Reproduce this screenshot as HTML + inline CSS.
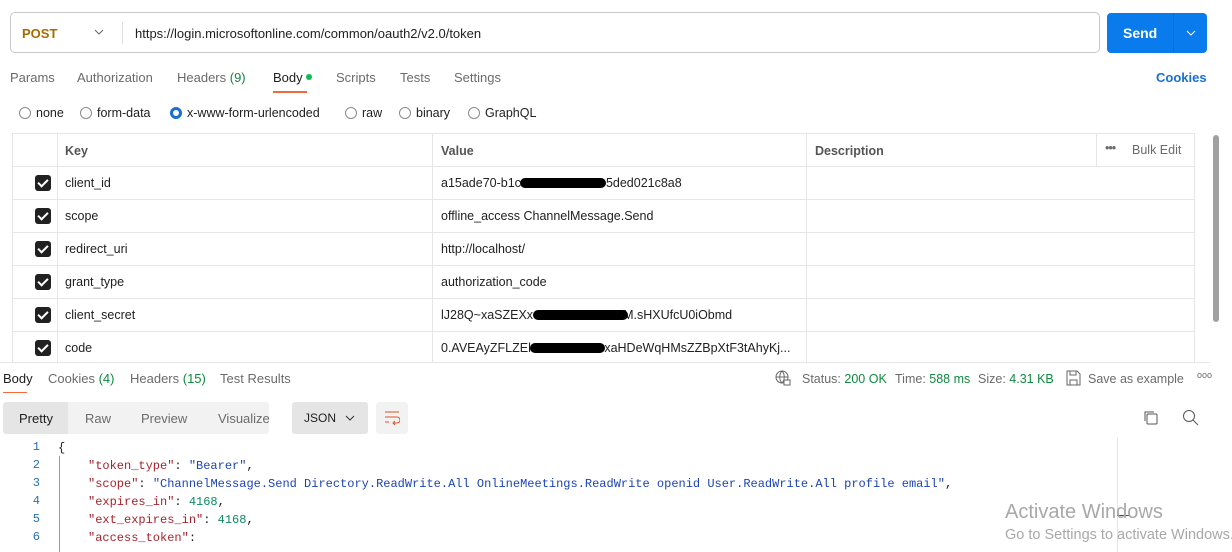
<!DOCTYPE html>
<html><head><meta charset="utf-8"><style>
*{box-sizing:border-box;margin:0;padding:0}
body{width:1232px;height:552px;overflow:hidden;background:#fff;font-family:"Liberation Sans",sans-serif;font-size:12.5px;color:#212121;position:relative}
.a{position:absolute;white-space:nowrap}
.g{color:#6b6b6b}
.gr{color:#0f8a3f}
.hl{position:absolute;height:1px;background:#e6e6e6}
.vl{position:absolute;width:1px;background:#e6e6e6}
.cb{position:absolute;left:35px;width:16px;height:16px;background:#212121;border-radius:3px}
.cb:after{content:"";position:absolute;left:5px;top:2px;width:4px;height:8px;border:solid #fff;border-width:0 2px 2px 0;transform:rotate(45deg)}
.rd{position:absolute;width:12px;height:12px;border:1px solid #8a8a8a;border-radius:50%}
.blk{position:absolute;background:#000;height:10px;border-radius:5px}
.mono{font-family:"Liberation Mono",monospace;font-size:12px}
.k{color:#a6242d}.s{color:#1c44b5}.n{color:#0f8a5f}
.ln{position:absolute;left:20px;width:20px;text-align:right;color:#2a6fb0;font-family:"Liberation Mono",monospace;font-size:12px}
</style></head><body>
<div class="a" style="left:10px;top:12px;width:1090px;height:41px;border:1px solid #c8c8c8;border-radius:5px"></div>
<div class="a" style="left:22px;top:26px;color:#a86b00;font-weight:bold;font-size:13px">POST</div>
<svg class="a" style="left:94px;top:29px" width="10" height="7"><path d="M1 1l4 4 4-4" stroke="#666" fill="none"/></svg>
<div class="vl" style="left:122px;top:22px;height:22px;background:#ddd"></div>
<div class="a" style="left:135px;top:26px;font-size:13px">https://login.microsoftonline.com/common/oauth2/v2.0/token</div>
<div class="a" style="left:1107px;top:13px;width:100px;height:40px;background:#097bed;border-radius:4px"></div>
<div class="vl" style="left:1173px;top:13px;height:40px;background:#0a6cd0"></div>
<div class="a" style="left:1123px;top:25px;color:#fff;font-weight:bold;font-size:14px">Send</div>
<svg class="a" style="left:1186px;top:30px" width="10" height="7"><path d="M1 1l4 4 4-4" stroke="#fff" fill="none"/></svg>
<div class="a g" style="left:10px;top:70px;font-size:13px">Params</div>
<div class="a g" style="left:77px;top:70px;font-size:13px">Authorization</div>
<div class="a g" style="left:177px;top:70px;font-size:13px">Headers <span class="gr">(9)</span></div>
<div class="a" style="left:273px;top:70px;font-size:13px">Body</div>
<div class="a" style="left:306px;top:74px;width:6px;height:6px;border-radius:50%;background:#0cbb52"></div>
<div class="a" style="left:273px;top:91px;width:34px;height:2px;background:#f26b3a"></div>
<div class="a g" style="left:336px;top:70px;font-size:13px">Scripts</div>
<div class="a g" style="left:400px;top:70px;font-size:13px">Tests</div>
<div class="a g" style="left:454px;top:70px;font-size:13px">Settings</div>
<div class="a" style="left:1156px;top:70px;font-size:13px;font-weight:bold;color:#1a6fd6">Cookies</div>
<div class="rd" style="left:19px;top:107px"></div><div class="a" style="left:36px;top:106px">none</div>
<div class="rd" style="left:80px;top:107px"></div><div class="a" style="left:97px;top:106px">form-data</div>
<div class="rd" style="left:170px;top:107px;border:3px solid #1a6fd6"></div><div class="a" style="left:187px;top:106px">x-www-form-urlencoded</div>
<div class="rd" style="left:345px;top:107px"></div><div class="a" style="left:362px;top:106px">raw</div>
<div class="rd" style="left:399px;top:107px"></div><div class="a" style="left:416px;top:106px">binary</div>
<div class="rd" style="left:468px;top:107px"></div><div class="a" style="left:485px;top:106px">GraphQL</div>
<div class="hl" style="left:12px;top:133px;width:1183px"></div>
<div class="hl" style="left:12px;top:166px;width:1183px"></div>
<div class="hl" style="left:12px;top:199px;width:1183px"></div>
<div class="hl" style="left:12px;top:232px;width:1183px"></div>
<div class="hl" style="left:12px;top:265px;width:1183px"></div>
<div class="hl" style="left:12px;top:298px;width:1183px"></div>
<div class="hl" style="left:12px;top:331px;width:1183px"></div>
<div class="vl" style="left:12px;top:133px;height:230px"></div>
<div class="vl" style="left:57px;top:133px;height:230px"></div>
<div class="vl" style="left:432px;top:133px;height:230px"></div>
<div class="vl" style="left:806px;top:133px;height:230px"></div>
<div class="vl" style="left:1096px;top:133px;height:33px"></div>
<div class="vl" style="left:1194px;top:133px;height:230px"></div>
<div class="a" style="left:65px;top:144px;font-weight:bold;color:#555">Key</div>
<div class="a" style="left:441px;top:144px;font-weight:bold;color:#555">Value</div>
<div class="a" style="left:815px;top:144px;font-weight:bold;color:#555">Description</div>
<div class="a g" style="left:1105px;top:141px;letter-spacing:-1px">•••</div>
<div class="a g" style="left:1132px;top:143px">Bulk Edit</div>
<div class="cb" style="top:175px"></div><div class="a" style="left:65px;top:176px">client_id</div>
<div class="a" style="left:441px;top:176px">a15ade70-b1c<span style="display:inline-block;width:85px"></span>5ded021c8a8</div>
<div class="blk" style="left:520px;top:178px;width:86px"></div>
<div class="cb" style="top:208px"></div><div class="a" style="left:65px;top:209px">scope</div>
<div class="a" style="left:441px;top:209px">offline_access ChannelMessage.Send</div>
<div class="cb" style="top:241px"></div><div class="a" style="left:65px;top:242px">redirect_uri</div>
<div class="a" style="left:441px;top:242px">http://localhost/</div>
<div class="cb" style="top:274px"></div><div class="a" style="left:65px;top:275px">grant_type</div>
<div class="a" style="left:441px;top:275px">authorization_code</div>
<div class="cb" style="top:307px"></div><div class="a" style="left:65px;top:308px">client_secret</div>
<div class="a" style="left:441px;top:308px">lJ28Q~xaSZEXx<span style="display:inline-block;width:90px"></span>M.sHXUfcU0iObmd</div>
<div class="blk" style="left:533px;top:310px;width:95px"></div>
<div class="cb" style="top:340px"></div><div class="a" style="left:65px;top:341px">code</div>
<div class="a" style="left:441px;top:341px">0.AVEAyZFLZEk<span style="display:inline-block;width:70px"></span>xaHDeWqHMsZZBpXtF3tAhyKj...</div>
<div class="blk" style="left:530px;top:343px;width:75px"></div>
<div class="a" style="left:1213px;top:135px;width:6px;height:187px;background:#a0a0a0;border-radius:3px"></div>
<div class="a" style="left:0;top:362px;width:1210px;height:190px;background:#fff;border-top:1px solid #e6e6e6"></div>
<div class="a" style="left:3px;top:371px;font-size:13px">Body</div>
<div class="a" style="left:3px;top:392px;width:24px;height:1px;background:#f26b3a"></div>
<div class="a g" style="left:48px;top:371px;font-size:13px">Cookies <span class="gr">(4)</span></div>
<div class="a g" style="left:130px;top:371px;font-size:13px">Headers <span class="gr">(15)</span></div>
<div class="a g" style="left:220px;top:371px;font-size:13px">Test Results</div>
<svg class="a" style="left:775px;top:370px" width="16" height="16"><circle cx="7" cy="7" r="6" stroke="#666" fill="none"/><path d="M1 7h12M7 1c-3 3-3 9 0 12M7 1c3 3 3 9 0 12" stroke="#666" fill="none"/><rect x="9" y="10" width="6" height="5" fill="#fff" stroke="#666"/></svg>
<div class="a g" style="left:802px;top:372px">Status: <span class="gr">200 OK</span></div>
<div class="a g" style="left:895px;top:372px">Time: <span class="gr">588 ms</span></div>
<div class="a g" style="left:978px;top:372px">Size: <span class="gr">4.31 KB</span></div>
<svg class="a" style="left:1066px;top:370px" width="15" height="16"><path d="M1 1h10l3 3v11H1z M4 1v4h6V1 M4 15v-5h7v5" stroke="#666" fill="none"/></svg>
<div class="a g" style="left:1088px;top:372px">Save as example</div>
<div class="a g" style="left:1197px;top:370px;font-size:9px">ooo</div>
<div class="a" style="left:3px;top:402px;width:266px;height:32px;background:#f2f2f2;border-radius:3px"></div>
<div class="a" style="left:3px;top:402px;width:65px;height:32px;background:#e5e5e5;border-radius:3px 0 0 3px"></div>
<div class="a" style="left:19px;top:411px;font-size:13px">Pretty</div>
<div class="a g" style="left:85px;top:411px;font-size:13px">Raw</div>
<div class="a g" style="left:141px;top:411px;font-size:13px">Preview</div>
<div class="a g" style="left:218px;top:411px;font-size:13px">Visualize</div>
<div class="a" style="left:292px;top:402px;width:76px;height:32px;background:#e5e5e5;border-radius:3px"></div>
<div class="a" style="left:304px;top:411px;font-size:12px">JSON</div>
<svg class="a" style="left:345px;top:415px" width="10" height="7"><path d="M1 1l4 4 4-4" stroke="#333" fill="none"/></svg>
<div class="a" style="left:376px;top:402px;width:32px;height:32px;background:#f2f2f2;border-radius:3px"></div>
<svg class="a" style="left:384px;top:410px" width="16" height="16"><path d="M1 2h14M1 7h12a3 3 0 0 1 0 6H9M11 11l-2 2 2 2M1 12h4" stroke="#e0532b" fill="none"/></svg>
<svg class="a" style="left:1143px;top:410px" width="16" height="16"><rect x="4" y="4" width="10" height="10" rx="1" stroke="#555" fill="none"/><path d="M2 11V2h9" stroke="#555" fill="none"/></svg>
<svg class="a" style="left:1182px;top:409px" width="17" height="17"><circle cx="7" cy="7" r="5.5" stroke="#555" fill="none"/><path d="M11 11l5 5" stroke="#555"/></svg>
<div class="vl" style="left:59px;top:456px;height:96px;background:#999"></div>
<div class="ln" style="top:440px">1</div><div class="a mono" style="left:58px;top:441px">{</div>
<div class="ln" style="top:458px">2</div><div class="a mono" style="left:88px;top:459px"><span class="k">"token_type"</span>: <span class="s">"Bearer"</span>,</div>
<div class="ln" style="top:476px">3</div><div class="a mono" style="left:88px;top:477px"><span class="k">"scope"</span>: <span class="s">"ChannelMessage.Send Directory.ReadWrite.All OnlineMeetings.ReadWrite openid User.ReadWrite.All profile email"</span>,</div>
<div class="ln" style="top:494px">4</div><div class="a mono" style="left:88px;top:495px"><span class="k">"expires_in"</span>: <span class="n">4168</span>,</div>
<div class="ln" style="top:512px">5</div><div class="a mono" style="left:88px;top:513px"><span class="k">"ext_expires_in"</span>: <span class="n">4168</span>,</div>
<div class="ln" style="top:530px">6</div><div class="a mono" style="left:88px;top:531px"><span class="k">"access_token"</span>:</div>
<div class="vl" style="left:1117px;top:438px;height:114px;background:#e6e6e6"></div>
<div class="a" style="left:1117px;top:515px;width:12px;height:1px;background:#444"></div>
<div class="a" style="left:1005px;top:501px;font-size:20px;color:#a8a8a8">Activate Windows</div>
<div class="a" style="left:1005px;top:527px;font-size:14.5px;color:#a8a8a8">Go to Settings to activate Windows.</div>
</body></html>
